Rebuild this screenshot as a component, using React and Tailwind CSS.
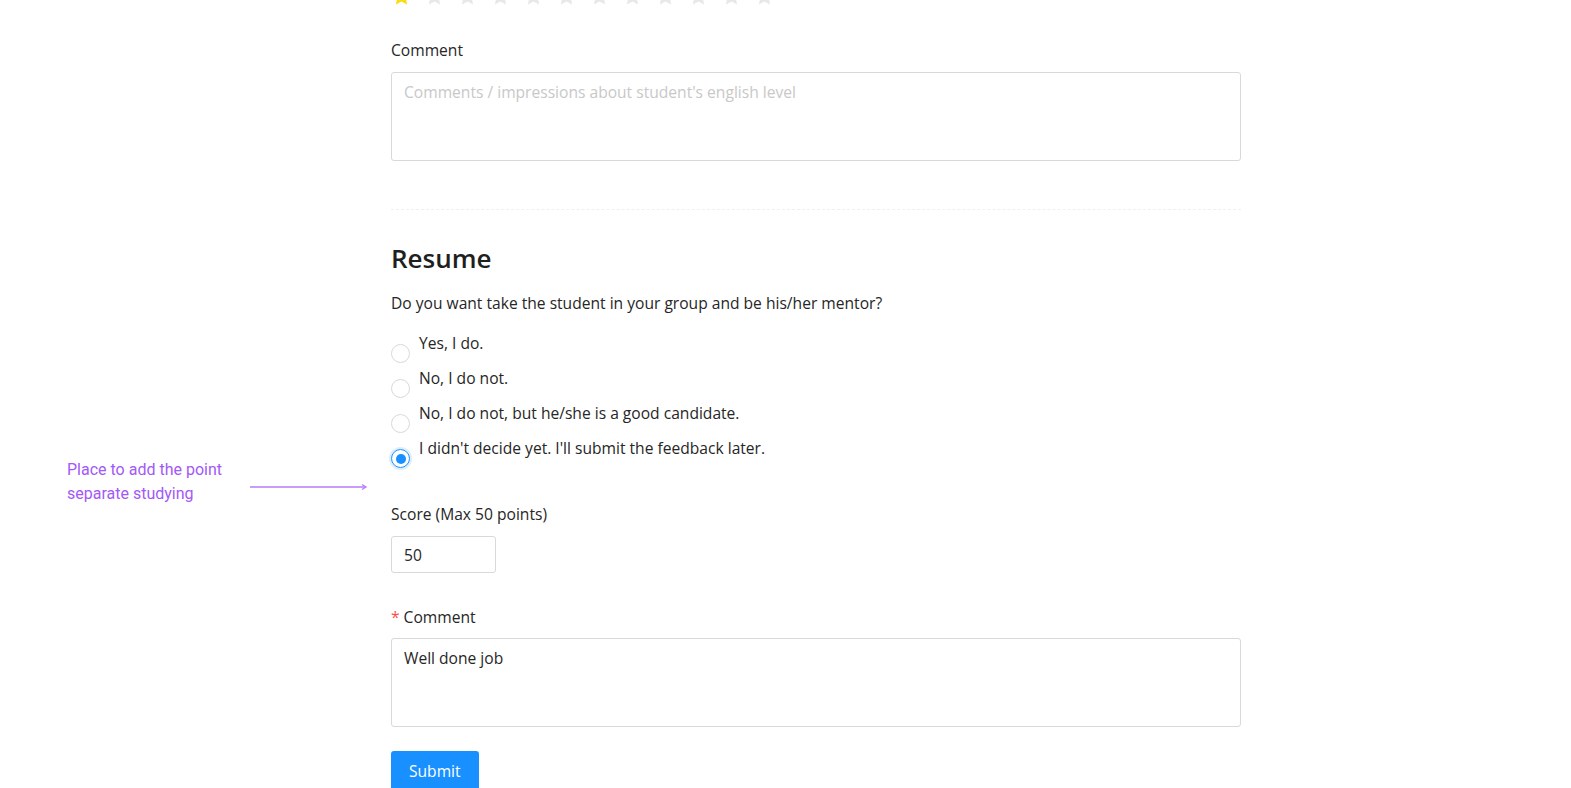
import { useState } from "react";

const options = [
  "Yes, I do.",
  "No, I do not.",
  "No, I do not, but he/she is a good candidate.",
  "I didn't decide yet. I'll submit the feedback later.",
];

const Star = ({ filled }) => (
  <svg width="21" height="21" viewBox="0 0 24 24" className="shrink-0">
    <path
      d="M12 1.5l3.1 6.6 7.2.9-5.3 5 1.4 7.1L12 17.6 5.6 21.1 7 14l-5.3-5 7.2-.9z"
      fill={filled ? "#fadb14" : "#e8e8e8"}
    />
  </svg>
);

const App = () => {
  const [choice, setChoice] = useState(3);
  const [score, setScore] = useState("50");
  const [comment, setComment] = useState("Well done job");

  return (
    <div
      className="h-[788px] overflow-hidden bg-white pt-px text-[15.6px] leading-[24px] text-[#262626]"
      style={{ fontFamily: '"Open Sans", "Noto Sans", sans-serif' }}
    >
      <div className="relative ml-[391px] w-[850px]">
        {/* Rating (scrolled off the top) */}
        <div className="-mt-[15px] flex gap-[12px]">
          {Array.from({ length: 12 }).map((_, i) => (
            <Star key={i} filled={i === 0} />
          ))}
        </div>

        <label className="mt-[31px] block">Comment</label>
        <textarea
          className="mt-[10px] block h-[89px] w-full resize-none rounded-[3px] border border-[#d9d9d9] px-3 py-[7px] outline-none placeholder:text-[#c8c8c8]"
          placeholder="Comments / impressions about student's english level"
        />

        <div className="mt-[48px] border-t border-dashed border-[#f0f0f0]" />

        <h2 className="mt-[31px] text-[26px] font-semibold leading-[35px] text-[#1f1f1f]">
          Resume
        </h2>
        <p className="mt-[15px]">
          Do you want take the student in your group and be his/her mentor?
        </p>

        {/* Radio group */}
        <div className="mt-[16px] flex flex-col">
          {options.map((opt, i) => (
            <label
              key={opt}
              className="flex h-[35px] cursor-pointer items-start gap-[9px]"
              onClick={() => setChoice(i)}
            >
              <span
                className={
                  i === choice
                    ? "mt-[13px] flex h-[19px] w-[19px] shrink-0 items-center justify-center rounded-full border border-[#1890ff] shadow-[0_0_0_2px_rgba(24,144,255,0.15)]"
                    : "mt-[13px] flex h-[19px] w-[19px] shrink-0 items-center justify-center rounded-full border border-[#d9d9d9]"
                }
              >
                {i === choice && (
                  <span className="h-[10px] w-[10px] rounded-full bg-[#1890ff]" />
                )}
              </span>
              <span>{opt}</span>
            </label>
          ))}
        </div>

        <label className="mt-[31px] block">Score (Max 50 points)</label>
        <input
          type="text"
          value={score}
          onChange={(e) => setScore(e.target.value)}
          className="mt-[10px] block h-[37px] w-[105px] rounded-[3px] border border-[#d9d9d9] px-3 outline-none"
        />

        <label className="mt-[32px] block">
          <span className="mr-1 text-[#ff4d4f]">*</span>Comment
        </label>
        <textarea
          value={comment}
          onChange={(e) => setComment(e.target.value)}
          className="mt-[9px] block h-[89px] w-full resize-none rounded-[3px] border border-[#d9d9d9] px-3 py-[7px] outline-none"
        />

        <button className="mt-[24px] h-[39px] rounded-[3px] bg-[#1890ff] px-[18px] text-white">
          Submit
        </button>

        {/* Annotation note */}
        <div className="absolute left-[-324px] top-[472px] flex items-start">
          <p
            className="w-[172px] text-[16px] leading-6 text-[#a259f7]"
            style={{ fontFamily: "Roboto, sans-serif" }}
          >
            Place to add the point separate studying
          </p>
          <svg width="120" height="10" viewBox="0 0 120 10" className="ml-[11px] mt-[24px]">
            <line x1="0" y1="5" x2="115" y2="5" stroke="#b57cf8" strokeWidth="1.3" />
            <path d="M112 2.5L116 5L112 7.5" fill="none" stroke="#b57cf8" strokeWidth="1.3" />
          </svg>
        </div>
      </div>
    </div>
  );
};

export default App;
